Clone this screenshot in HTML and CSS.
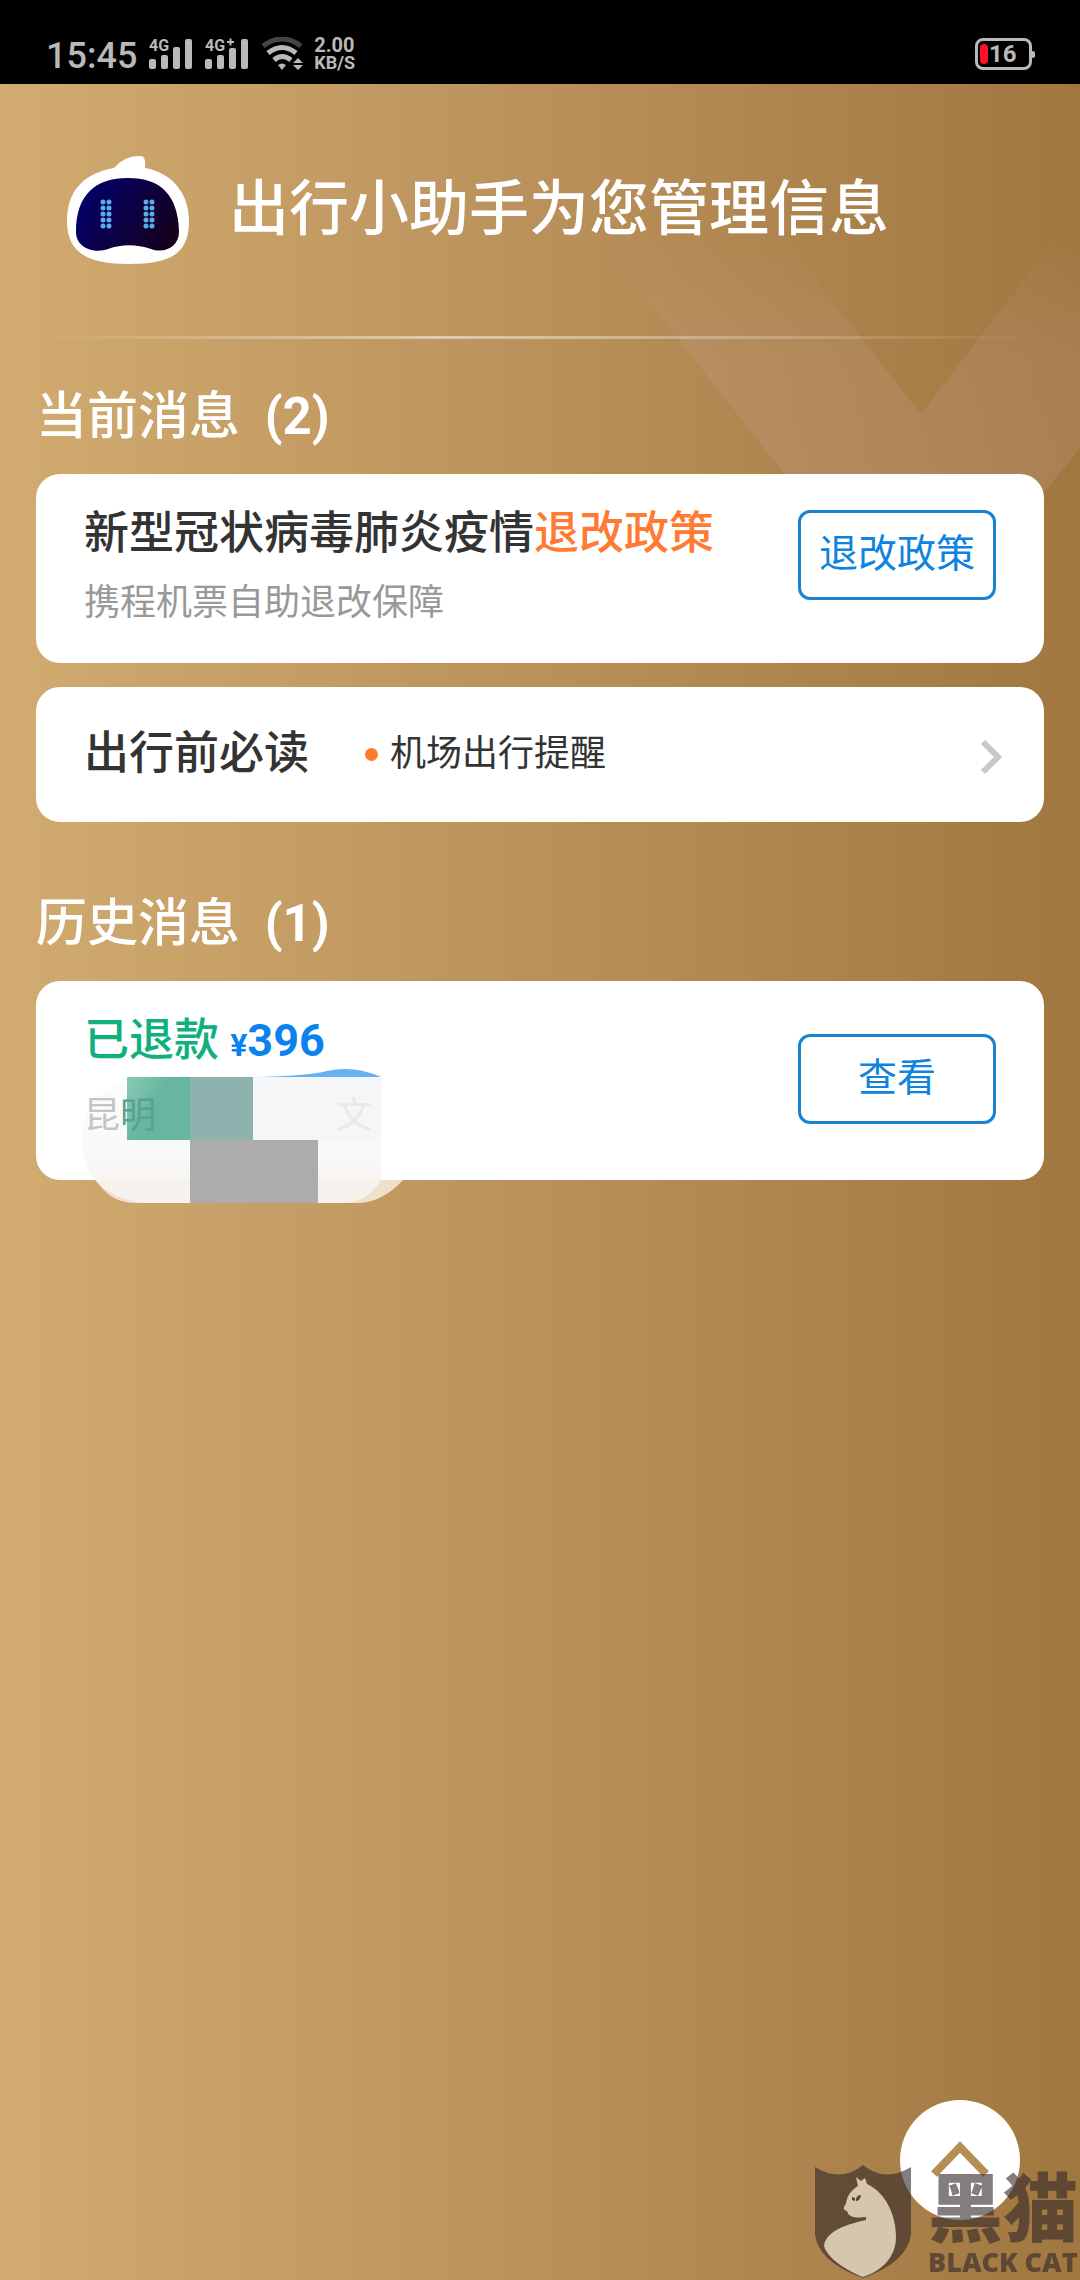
FILE: index.html
```html
<!DOCTYPE html>
<html lang="zh-CN">
<head>
  <meta charset="UTF-8" />
  <meta name="viewport" content="width=device-width, initial-scale=1.0"/>
  <title>出行小助手</title>
  <link rel="stylesheet" href="styles.css">
</head>
<body>
  <div class="status-bar">
    <span class="time">15:45</span>
    <svg class="signal" width="44" height="36" viewBox="0 0 44 36">
      <text x="0" y="17">4G</text>
      <rect x="0" y="25" width="7" height="10" rx="2"/>
      <rect x="12" y="21" width="7" height="14" rx="2"/>
      <rect x="24" y="13" width="7" height="22" rx="2"/>
      <rect x="36" y="5" width="7" height="30" rx="2"/>
    </svg>
    <svg class="signal" width="44" height="36" viewBox="0 0 44 36">
      <text x="0" y="17">4G</text>
      <path d="M22 7h2.500v-2.500h2v2.500h2.500v2h-2.500v2.500h-2v-2.500h-2.500z"/>
      <rect x="0" y="25" width="7" height="10" rx="2"/>
      <rect x="12" y="21" width="7" height="14" rx="2"/>
      <rect x="24" y="14" width="7" height="21" rx="2"/>
      <rect x="36" y="5" width="7" height="30" rx="2"/>
    </svg>
    <svg class="wifi" width="43" height="34" viewBox="0 0 43 34">
      <path d="M2 9Q21 -5 40 9" fill="none" stroke="#444" stroke-width="5"/>
      <path d="M7 16Q21 5 35 16" fill="none" stroke="#b9b9b9" stroke-width="5"/>
      <path d="M13 23Q21 16 30 23" fill="none" stroke="#b9b9b9" stroke-width="5"/>
      <path d="M17 28Q21 25 25 28L21 33z" fill="#b9b9b9"/>
      <path d="M32 26l5-5 5 5zM32 28h10l-5 5z" fill="#b9b9b9"/>
    </svg>
    <div class="speed"><span>2.00</span><small>KB/S</small></div>
    <div class="battery"><i></i>16</div>
  </div>

  <svg class="decor" width="480" height="406" viewBox="0 0 480 406">
    <defs>
      <linearGradient id="fade" x1="0" y1="0" x2="0" y2="1">
        <stop offset="0" stop-color="#c8a49c" stop-opacity="0"/>
        <stop offset="0.300" stop-color="#c8a49c" stop-opacity="0.180"/>
        <stop offset="1" stop-color="#c8a49c" stop-opacity="0.260"/>
      </linearGradient>
    </defs>
    <path d="M0 0H184L321 174L460 -7H480V208L321 406z" fill="url(#fade)"/>
  </svg>

  <header class="hero">
    <svg class="robot" width="123" height="110" viewBox="0 0 123 110">
      <defs>
        <linearGradient id="face" x1="0" y1="0.300" x2="1" y2="0.700">
          <stop offset="0" stop-color="#02006c"/>
          <stop offset="1" stop-color="#16001c"/>
        </linearGradient>
      </defs>
      <path d="M47 13Q58 0 74 1Q79 1 78 13C105 18 122 38 122 66C122 97 106 109 62 109C18 109 0 96 0 66C0 36 17 18 47 13z" fill="#fff"/>
      <path d="M61 23C94 23 111 40 112 77C112 92 97 99 84 94C69 89 55 89 41 94C27 99 9 93 9 77C9 40 28 23 61 23z" fill="url(#face)"/>
      <g stroke="#58afe8" stroke-width="5" stroke-linecap="round" stroke-dasharray="0 6">
        <path d="M36 47v25M42 47v25M79 47v25M85 47v25"/>
      </g>
    </svg>
    <h1>出行小助手为您管理信息</h1>
  </header>

  <main>
    <section class="messages">
      <h2>当前消息 <b>(2)</b></h2>
      <article class="card">
        <div class="info">
          <h3>新型冠状病毒肺炎疫情<em>退改政策</em></h3>
          <p>携程机票自助退改保障</p>
        </div>
        <button class="action">退改政策</button>
      </article>
      <a class="card card-link" href="#">
        <h3>出行前必读</h3>
        <span class="tip">机场出行提醒</span>
        <svg class="arrow" width="24" height="36" viewBox="0 0 24 36">
          <path d="M3 3L18 18L3 33" fill="none" stroke="#c8c8c8" stroke-width="6"/>
        </svg>
      </a>
    </section>

    <section class="messages history">
      <h2>历史消息 <b>(1)</b></h2>
      <article class="card refund">
        <!-- passenger details are masked -->
        <svg class="mask" width="330" height="140" viewBox="0 0 330 140">
          <defs>
            <linearGradient id="haze" x1="0" y1="0" x2="0" y2="1">
              <stop offset="0" stop-color="#fafafa" stop-opacity="0.600"/>
              <stop offset="0.600" stop-color="#f7f7f6" stop-opacity="0.800"/>
              <stop offset="1" stop-color="#f6f2ec"/>
            </linearGradient>
            <linearGradient id="green" x1="0" y1="0" x2="1" y2="0.600">
              <stop offset="0" stop-color="#8cc9b6"/>
              <stop offset="0.500" stop-color="#67b7a0"/>
            </linearGradient>
          </defs>
          <path d="M14 112H321Q300 135 275 135H53Q28 135 14 112z" fill="#efe0cc"/>
          <path d="M60 9H299V112Q285 135 260 135H60Q0 125 0 72Q0 20 60 9z" fill="url(#haze)"/>
          <path d="M170 9Q225 8 245 3Q272 -3 299 9z" fill="#68b0f5"/>
          <rect x="171" y="9" width="128" height="64" fill="#f5f6f8"/>
          <rect x="45" y="9" width="63" height="63" fill="url(#green)"/>
          <rect x="108" y="9" width="63" height="63" fill="#8eb2ad"/>
          <rect x="108" y="72" width="128" height="63" fill="#adacac"/>
        </svg>
        <div class="info">
          <h3>已退款 <strong><small>¥</small>396</strong></h3>
          <p class="masked"><span>昆</span><span class="on-green">明</span><span class="last">文</span></p>
        </div>
        <button class="action">查看</button>
      </article>
    </section>
  </main>

  <button class="to-top" aria-label="返回顶部">
    <svg width="58" height="38" viewBox="0 0 58 38">
      <path d="M3 34L29 7L55 34" fill="none" stroke="#b68d55" stroke-width="8"/>
    </svg>
  </button>

  <div class="watermark">
    <svg width="98" height="115" viewBox="0 0 98 115">
      <path d="M1 3Q27 19 49 1Q71 19 97 3V70Q94 98 49 114Q4 98 1 70z" fill="#31262a" fill-opacity="0.600"/>
      <path d="M42 13L47 17L51 14L53 20C72 29 82 51 82 73C82 94 67 107 49 113C32 106 14 95 10 82C12 66 35 60 52 56V53C42 54 35 54 33 47C29 46 29 43 32 40C33 30 39 25 44 22z" fill="#e3d4bd" fill-opacity="0.900"/>
      <path d="M38 33l3 1v3l-3-1zM42 35q1-4 5-4q-1 6-5 6z" fill="#59452f"/>
    </svg>
    <div class="brand">
      <span class="brand-cn">黑猫</span>
      <span class="brand-en">BLACK CAT</span>
    </div>
  </div>
</body>
</html>
```

FILE: styles.css
```css
* {
  box-sizing: border-box;
}

body {
  margin: 0;
  min-height: 100vh;
  position: relative;
  font-family: Roboto, "Noto Sans CJK SC", sans-serif;
  color: #333;
  background: linear-gradient(90deg, #d1ab70 0%, #ba915b 50%, #ad844d 75%, #a17740 100%);
}

h1, h2, h3, p {
  margin: 0;
  font-weight: 500;
}

.status-bar {
  display: flex;
  align-items: center;
  gap: 12px;
  height: 84px;
  padding: 24px 46px 0;
  background: #000;
  color: #b9b9b9;
}

.time {
  padding-top: 4px;
  font-size: 36px;
  line-height: 40px;
  font-weight: 500;
}

.signal {
  margin-top: -4px;
  fill: #b9b9b9;
}

.signal text {
  font-size: 16px;
  font-weight: 700;
}

.speed {
  display: flex;
  flex-direction: column;
  margin-left: -2px;
  font-size: 20px;
  line-height: 17px;
  font-weight: 700;
}

.speed small {
  font-size: 18px;
}

.battery {
  position: relative;
  display: flex;
  align-items: center;
  gap: 1px;
  width: 57px;
  height: 32px;
  margin-right: 2px;
  margin-left: auto;
  padding-left: 2px;
  border: 3px solid #b9b9b9;
  border-radius: 8px;
  font-size: 24px;
  font-weight: 700;
}

.battery::after {
  content: "";
  position: absolute;
  right: -6px;
  width: 4px;
  height: 7px;
  border-radius: 2px;
  background: #b9b9b9;
}

.battery i {
  width: 8px;
  height: 20px;
  border-radius: 4px;
  background: #ff1029;
}

/* big V behind the header */
.decor {
  position: absolute;
  top: 240px;
  right: 0;
}

.hero {
  position: relative;
  display: flex;
  align-items: center;
  gap: 39px;
  padding: 71px 67px;
}

.hero::after {
  content: "";
  position: absolute;
  left: 36px;
  right: 36px;
  bottom: -3px;
  height: 3px;
  background: linear-gradient(90deg, transparent, rgba(255, 255, 255, 0.5) 40%, transparent);
}

.hero h1 {
  color: #fff;
  font-size: 60px;
  line-height: 84px;
}

main {
  position: relative;
  padding: 3px 36px 0;
}

.messages h2 {
  padding: 50px 0 29px;
  color: #fff;
  font-size: 51px;
  line-height: 56px;
}

.messages h2 b {
  margin-left: 12px;
}

.history {
  margin-top: 24px;
}

.card {
  position: relative;
  display: flex;
  align-items: flex-start;
  justify-content: space-between;
  padding: 36px 48px 36px;
  border-radius: 24px;
  background: #fff;
}

.card h3 {
  font-size: 45px;
  line-height: 48px;
}

.card em {
  font-style: normal;
  color: #ff7a33;
}

.card p {
  margin-top: 21px;
  font-size: 36px;
  line-height: 48px;
  font-weight: 400;
  color: #999;
}

.action {
  width: 198px;
  height: 90px;
  padding: 0 0 10px;
  border: 3px solid #1a82d2;
  border-radius: 12px;
  background: #fff;
  color: #0f83e0;
  font-family: inherit;
  font-size: 39px;
}

.card-link {
  align-items: center;
  justify-content: flex-start;
  margin-top: 24px;
  padding: 43px 40px 44px 48px;
  color: #333;
  text-decoration: none;
}

.tip {
  display: flex;
  align-items: center;
  gap: 12px;
  margin-left: 56px;
  font-size: 36px;
  line-height: 36px;
}

.tip::before {
  content: "";
  width: 13px;
  height: 13px;
  border-radius: 50%;
  background: #ff7a2b;
}

.arrow {
  margin: 6px 0 0 auto;
}

.refund {
  padding-bottom: 40px;
}

.info {
  position: relative;
}

.refund h3 {
  color: #10b07e;
}

.refund strong {
  color: #0a83ee;
}

.refund small {
  font-size: 32px;
  line-height: 1;
}

.refund .masked {
  display: flex;
  margin-top: 27px;
  color: #c4c4c4;
}

.masked .on-green {
  color: #5ca18e;
}

.masked .last {
  margin-left: 180px;
  color: #e8e9ea;
}

.refund .action {
  align-self: center;
}

.mask {
  position: absolute;
  left: 46px;
  bottom: -28px;
}

.to-top {
  position: fixed;
  right: 60px;
  bottom: 60px;
  width: 120px;
  height: 120px;
  padding: 0;
  border: none;
  border-radius: 50%;
  background: #fff;
}

.watermark {
  position: fixed;
  right: 2px;
  bottom: 0;
  display: flex;
  gap: 16px;
  pointer-events: none;
}

.brand {
  display: flex;
  flex-direction: column;
  color: rgba(49, 38, 42, 0.6);
  font-weight: 900;
}

.brand-cn {
  font-family: "Noto Sans CJK SC", sans-serif;
  font-size: 75px;
  line-height: 80px;
}

.brand-en {
  font-family: "Open Sans", sans-serif;
  font-size: 27px;
  line-height: 36px;
}
```
